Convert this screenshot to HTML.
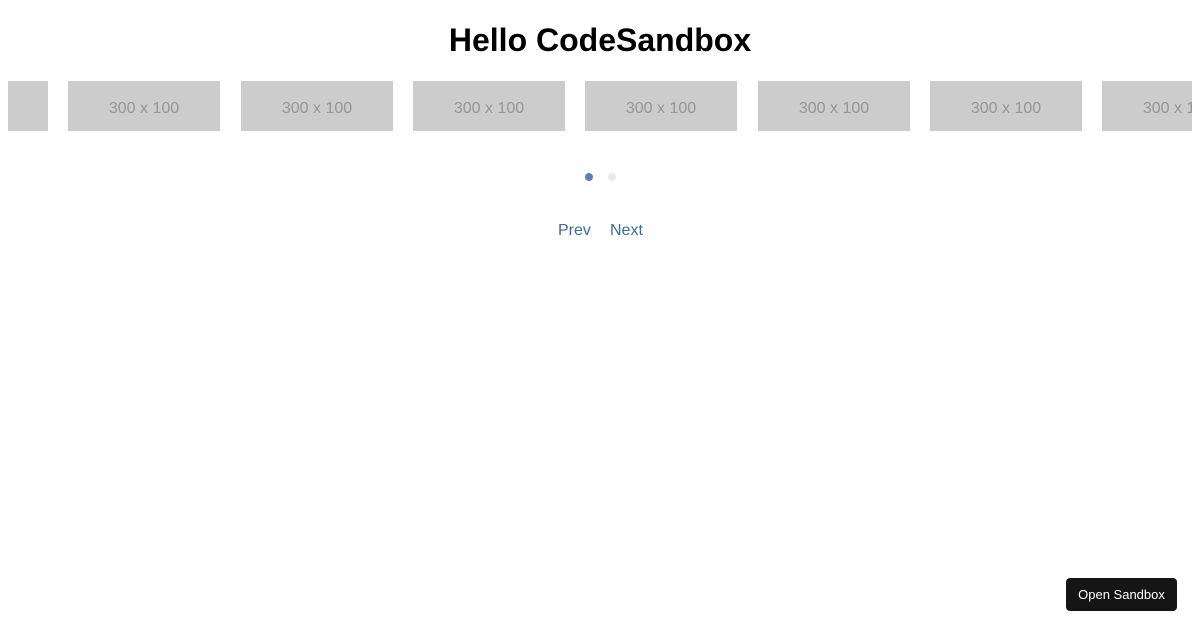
<!DOCTYPE html>
<html><head><style>
body{margin:0;width:1200px;height:630px;background:#fff;font-family:"Liberation Sans",Arial,sans-serif;position:relative;overflow:hidden}
h1{position:absolute;top:21px;left:0;width:1200px;text-align:center;margin:0;font-size:32px;font-weight:bold;color:#000;line-height:38px}
.wrap{position:absolute;left:8px;top:81px;width:1184px;height:50px;overflow:hidden}
.b{position:absolute;top:0;height:50px;width:152px;background:#cccccc;color:#969696;font-size:16px;line-height:56px;text-align:center}
.d{position:absolute;top:173px;width:8px;height:8px;border-radius:50%}
.l{position:absolute;top:221px;font-size:16px;color:#3b6aa8;line-height:20px}
.btn{position:absolute;left:1066px;top:578px;width:111px;height:33px;background:#151515;color:#fff;border-radius:4px;font-size:13px;line-height:33px;text-align:center}
</style></head><body>
<h1>Hello CodeSandbox</h1>
<div class="wrap">
<div class="b" style="left:-112px">300 x 100</div>
<div class="b" style="left:60px">300 x 100</div>
<div class="b" style="left:233px">300 x 100</div>
<div class="b" style="left:405px">300 x 100</div>
<div class="b" style="left:577px">300 x 100</div>
<div class="b" style="left:750px">300 x 100</div>
<div class="b" style="left:922px">300 x 100</div>
<div class="b" style="left:1094px">300 x 100</div>
</div>
<div class="d" style="left:585px;background:#5b7fc4"></div>
<div class="d" style="left:608px;background:#e6eaee"></div>
<div class="l" style="left:558px">Prev</div>
<div class="l" style="left:610px">Next</div>
<div class="btn">Open Sandbox</div>
</body></html>
